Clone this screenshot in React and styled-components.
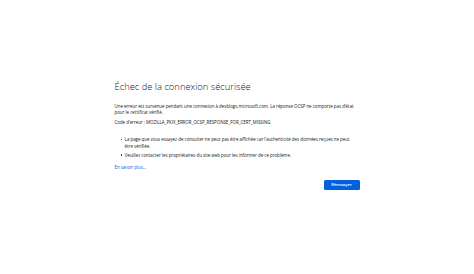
import React from "react";
import styled, { createGlobalStyle } from "styled-components";

const GlobalStyle = createGlobalStyle`
  html, body {
    margin: 0;
    padding: 0;
    background: #ffffff;
  }
  body {
    font-family: "Open Sans", "Noto Sans", sans-serif;
    color: #15141a;
  }
`;

const Page = styled.div`
  width: 474px;
  height: 274px;
  display: flex;
  justify-content: center;
  padding-top: 80px;
  box-sizing: border-box;
`;

const Container = styled.div`
  width: 245px;
  display: flex;
  flex-direction: column;
`;

const Title = styled.h1`
  margin: 0 0 9px;
  font-size: 9.4px;
  line-height: 14px;
  font-weight: 300;
  color: #15141a;
`;

const Text = styled.p`
  margin: 0 0 3px;
  font-size: 4.4px;
  line-height: 6.4px;
`;

const List = styled.ul`
  margin: 8px 0 4px;
  padding: 0 8px 0 6px;
  list-style: none;
`;

const Item = styled.li`
  display: flex;
  gap: 2.5px;
  font-size: 4.4px;
  line-height: 6.4px;
  margin-bottom: 2.5px;
  &::before {
    content: "";
    flex: none;
    width: 1.6px;
    height: 1.6px;
    margin-top: 2.4px;
    border-radius: 50%;
    background: #15141a;
  }
`;

const Link = styled.a`
  font-size: 4.4px;
  line-height: 6.4px;
  color: #0061e0;
  text-decoration: none;
`;

const Actions = styled.div`
  display: flex;
  justify-content: flex-end;
  margin-top: 9px;
`;

const Button = styled.button`
  width: 36px;
  height: 10px;
  padding: 0;
  border: none;
  border-radius: 1.5px;
  background: #0061e0;
  color: #ffffff;
  font-family: inherit;
  font-size: 4.2px;
  font-weight: 600;
`;

export default function App() {
  return (
    <>
      <GlobalStyle />
      <Page>
        <Container>
          <Title>Échec de la connexion sécurisée</Title>
          <Text>
            Une erreur est survenue pendant une connexion à devblogs.microsoft.com. La
            réponse OCSP ne comporte pas d’état pour le certificat vérifié.
          </Text>
          <Text>Code d’erreur : MOZILLA_PKIX_ERROR_OCSP_RESPONSE_FOR_CERT_MISSING</Text>
          <List>
            <Item>
              La page que vous essayez de consulter ne peut pas être affichée car
              l’authenticité des données reçues ne peut être vérifiée.
            </Item>
            <Item>
              Veuillez contacter les propriétaires du site web pour les informer de ce
              problème.
            </Item>
          </List>
          <Link href="#">En savoir plus…</Link>
          <Actions>
            <Button>Réessayer</Button>
          </Actions>
        </Container>
      </Page>
    </>
  );
}
